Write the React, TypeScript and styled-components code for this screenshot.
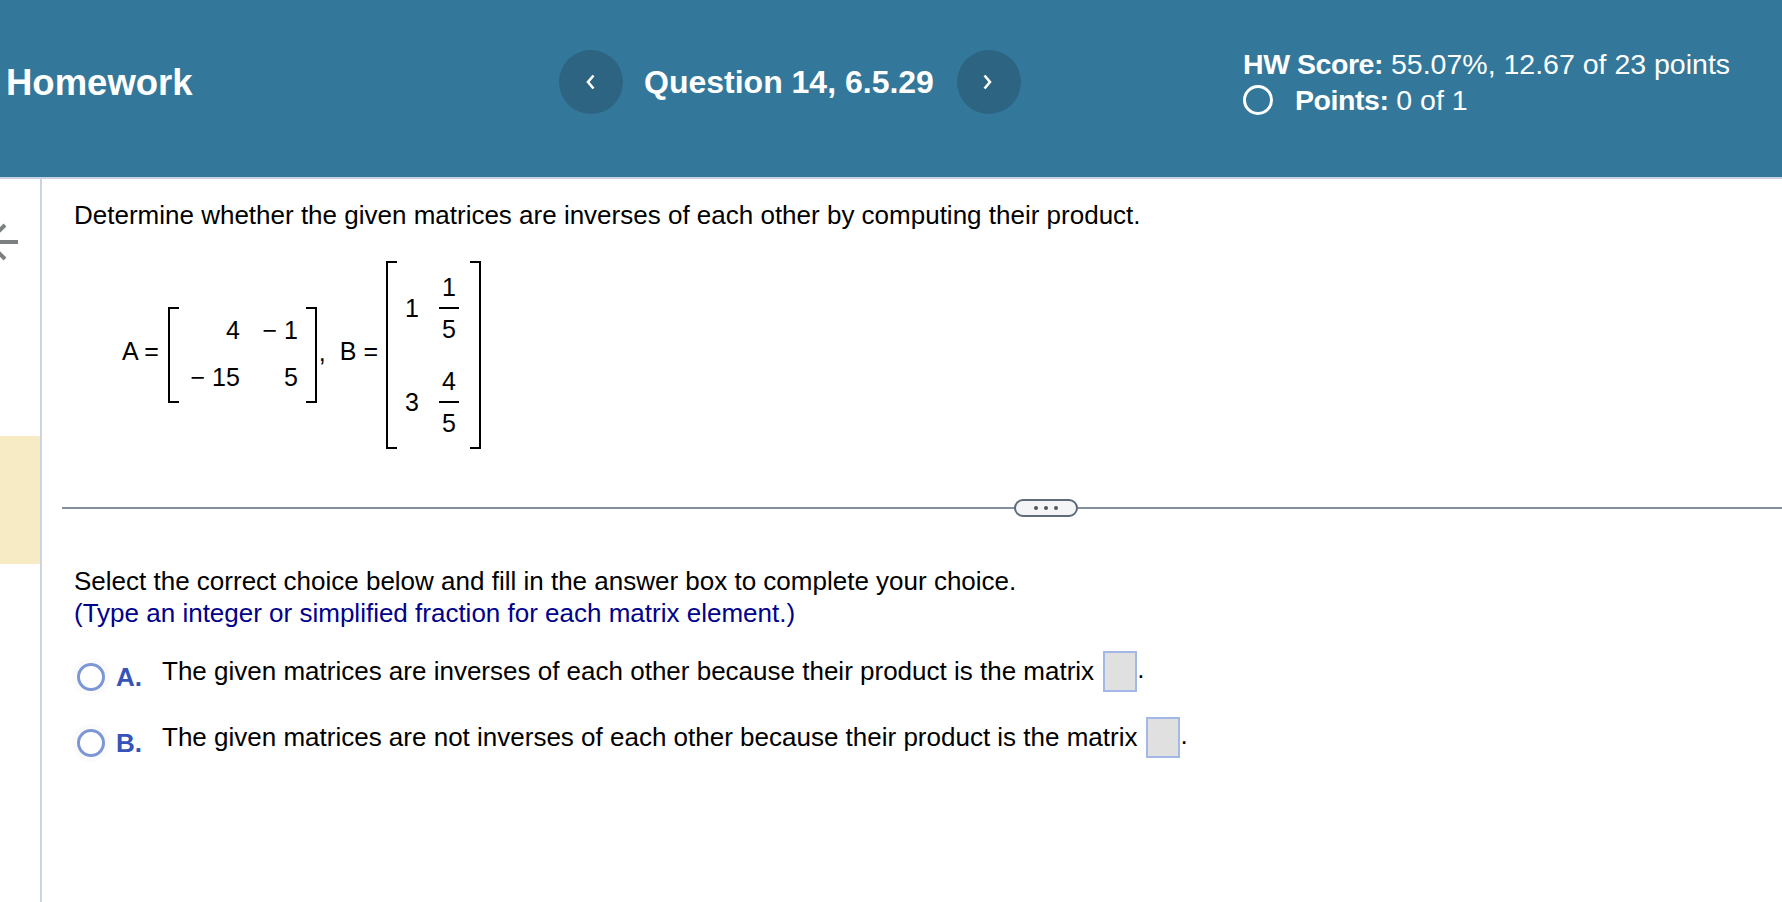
import React from 'react';
import styled, { createGlobalStyle } from 'styled-components';

const GlobalStyle = createGlobalStyle`
  html, body {
    margin: 0;
    padding: 0;
    height: 100%;
    background: #fff;
    overflow: hidden;
  }

  body {
    font-family: 'Liberation Sans', Arial, sans-serif;
    color: #000;
  }
`;

function App() {
  return (
    <Page>
      <GlobalStyle />
      <Header>
        <Title>Homework</Title>
        <QuestionNav>
          <NavButton>
            <svg width='14' height='18' viewBox='0 0 14 18'>
              <path d='M9.5 2.5 4 9l5.5 6.5' fill='none' stroke='#fff' strokeWidth='2.6' />
            </svg>
          </NavButton>
          <QuestionLabel>Question 14, 6.5.29</QuestionLabel>
          <NavButton>
            <svg width='14' height='18' viewBox='0 0 14 18'>
              <path d='M2.5 2.5 8 9l-5.5 6.5' fill='none' stroke='#fff' strokeWidth='2.6' />
            </svg>
          </NavButton>
        </QuestionNav>
        <ScoreBox>
          <ScoreLine>
            <b>HW Score:</b> 55.07%, 12.67 of 23 points
          </ScoreLine>
          <PointsLine>
            <StatusRing />
            <span>
              <b>Points:</b> 0 of 1
            </span>
          </PointsLine>
        </ScoreBox>
      </Header>
      <Body>
        <SidePanel>
          <SplitterArrow>
            <svg width='24' height='44' viewBox='0 0 24 44'>
              <path d='M-10 22H18M5 5-12 22 5 39' fill='none' stroke='#7d8080' strokeWidth='4' />
            </svg>
          </SplitterArrow>
          <HelpTab />
        </SidePanel>
        <Main>
          <Question>
            <Prompt>Determine whether the given matrices are inverses of each other by computing their product.</Prompt>
            <Equation>
              <MatrixName>A =</MatrixName>
              <Matrix $gap={9}>
                <Bracket $side='left' />
                <IntegerGrid>
                  <span>4</span>
                  <span>− 1</span>
                  <span>− 15</span>
                  <span>5</span>
                </IntegerGrid>
                <Bracket $side='right' />
              </Matrix>
              <Comma>,</Comma>
              <MatrixName>B =</MatrixName>
              <Matrix $gap={8}>
                <Bracket $side='left' />
                <MixedGrid>
                  <span>1</span>
                  <Fraction>
                    <Numerator>1</Numerator>
                    <Denominator>5</Denominator>
                  </Fraction>
                  <span>3</span>
                  <Fraction>
                    <Numerator>4</Numerator>
                    <Denominator>5</Denominator>
                  </Fraction>
                </MixedGrid>
                <Bracket $side='right' />
              </Matrix>
            </Equation>
          </Question>
          <Divider>
            <DividerPill>
              <i />
              <i />
              <i />
            </DividerPill>
          </Divider>
          <Answer>
            <Prompt>Select the correct choice below and fill in the answer box to complete your choice.</Prompt>
            <Hint>(Type an integer or simplified fraction for each matrix element.)</Hint>
            <Choices>
              <Choice>
                <Radio />
                <ChoiceLetter>A.</ChoiceLetter>
                <ChoiceText>The given matrices are inverses of each other because their product is the matrix</ChoiceText>
                <AnswerBox />
                <Period>.</Period>
              </Choice>
              <Choice>
                <Radio />
                <ChoiceLetter>B.</ChoiceLetter>
                <ChoiceText>The given matrices are not inverses of each other because their product is the matrix</ChoiceText>
                <AnswerBox />
                <Period>.</Period>
              </Choice>
            </Choices>
          </Answer>
        </Main>
      </Body>
    </Page>
  );
}

const Page = styled.div`
  display: flex;
  flex-direction: column;
  height: 902px;
`;

const Header = styled.header`
  display: flex;
  align-items: center;
  height: 179px;
  box-sizing: border-box;
  padding-bottom: 14px;
  background: #33789a;
  border-bottom: 2px solid #c8d2e0;
  color: #fff;
  flex-shrink: 0;
`;

const Title = styled.h1`
  width: 553px;
  margin: 0;
  padding: 2px 0 0 6px;
  font-size: 36.5px;
  font-weight: 700;
`;

const QuestionNav = styled.div`
  display: flex;
  align-items: center;
  width: 684px;
`;

const NavButton = styled.div`
  display: flex;
  align-items: center;
  justify-content: center;
  width: 64px;
  height: 64px;
  border-radius: 50%;
  background: #2c6482;
`;

const QuestionLabel = styled.div`
  margin: 0 23px 0 21px;
  padding-top: 2px;
  font-size: 32px;
  font-weight: 700;
`;

const ScoreBox = styled.div`
  display: flex;
  flex-direction: column;
  gap: 6px;
  font-size: 28.5px;

  b {
    letter-spacing: -0.45px;
  }
`;

const ScoreLine = styled.div`
  line-height: 30px;
`;

const PointsLine = styled.div`
  display: flex;
  align-items: center;
  gap: 22px;
  line-height: 30px;
`;

const StatusRing = styled.span`
  width: 30px;
  height: 30px;
  box-sizing: border-box;
  border: 3px solid #fff;
  border-radius: 50%;
`;

const Body = styled.div`
  display: flex;
  flex: 1;
  min-height: 0;
`;

const SidePanel = styled.aside`
  position: relative;
  width: 40px;
  border-right: 2px solid #ccd3e4;
  flex-shrink: 0;
`;

const SplitterArrow = styled.div`
  position: absolute;
  left: 0;
  top: 41px;
  line-height: 0;
  filter: blur(0.7px);
`;

const HelpTab = styled.div`
  position: absolute;
  left: 0;
  right: 0;
  top: 257px;
  height: 128px;
  background: #f7ebc6;
`;

const Main = styled.main`
  flex: 1;
  min-width: 0;
  padding-left: 20px;
`;

const Question = styled.section`
  height: 328px;
  padding: 20px 0 0 12px;
  box-sizing: border-box;
`;

const Prompt = styled.div`
  font-size: 26px;
  line-height: 32px;
`;

const Equation = styled.div`
  display: flex;
  align-items: center;
  height: 188px;
  margin: 30px 0 0 48px;
  font-size: 25px;
`;

const MatrixName = styled.span`
  padding-bottom: 7px;
`;

const Matrix = styled.div<{ $gap: number }>`
  display: flex;
  align-items: stretch;
  margin-left: ${({ $gap }) => $gap}px;
`;

const Bracket = styled.div<{ $side: 'left' | 'right' }>`
  width: 9px;
  border: solid #000;
  border-width: 2px 0;
  ${({ $side }) => ($side === 'left' ? 'border-left-width: 2px;' : 'border-right-width: 2px;')}
`;

const IntegerGrid = styled.div`
  display: grid;
  grid-template-columns: 46px 58px;
  grid-auto-rows: 47px;
  align-items: center;
  justify-items: end;
  padding: 0 8px 2px 15px;
  width: 127px;
  box-sizing: border-box;
  white-space: nowrap;
`;

const MixedGrid = styled.div`
  display: grid;
  grid-template-columns: 20px 20px;
  column-gap: 17px;
  grid-auto-rows: 94px;
  align-items: center;
  justify-items: center;
  padding: 0 11px 0 5px;
  width: 73px;
  box-sizing: border-box;
`;

const Comma = styled.span`
  margin: -6px 14px 0 2px;
`;

const Fraction = styled.div`
  display: flex;
  flex-direction: column;
  align-items: center;
  width: 20px;
  line-height: 28px;
`;

const Numerator = styled.span`
  align-self: stretch;
  padding-bottom: 6px;
  text-align: center;
  border-bottom: 2px solid #000;
`;

const Denominator = styled.span`
  padding-top: 6px;
`;

const Divider = styled.div`
  position: relative;
  height: 2px;
  background: #858e9e;
`;

const DividerPill = styled.div`
  position: absolute;
  left: 952px;
  top: -8px;
  display: flex;
  align-items: center;
  justify-content: center;
  gap: 6px;
  width: 64px;
  height: 18px;
  box-sizing: border-box;
  background: #f4f5f7;
  border: 2px solid #5f6b7a;
  border-radius: 9px;

  i {
    width: 4px;
    height: 4px;
    border-radius: 50%;
    background: #555;
  }
`;

const Answer = styled.section`
  padding: 56px 0 0 12px;
`;

const Hint = styled.div`
  font-size: 26px;
  line-height: 32px;
  color: #00008b;
`;

const Choices = styled.div`
  display: flex;
  flex-direction: column;
  gap: 25px;
  margin-top: 22px;
`;

const Choice = styled.div`
  display: flex;
  align-items: flex-start;
  height: 41px;
`;

const Radio = styled.span`
  width: 28px;
  height: 28px;
  margin: 12px 0 0 3px;
  box-sizing: border-box;
  border: 3px solid #7d97d6;
  border-radius: 50%;
  box-shadow: 0 0 0 5px #fbfbfb;
  flex-shrink: 0;
`;

const ChoiceLetter = styled.span`
  width: 46px;
  margin: 10px 0 0 11px;
  font-size: 26px;
  font-weight: 700;
  line-height: 32px;
  color: #3653b8;
`;

const ChoiceText = styled.span`
  font-size: 26px;
  line-height: 32px;
  margin: 4px 9px 0 0;
  white-space: nowrap;
`;

const AnswerBox = styled.span`
  width: 34px;
  height: 41px;
  box-sizing: border-box;
  background: #e0e0e0;
  border: 2px solid #a3b8e6;
  flex-shrink: 0;
`;

const Period = styled.span`
  font-size: 26px;
  line-height: 32px;
  margin: 2px 0 0 0;
`;

export default App;
